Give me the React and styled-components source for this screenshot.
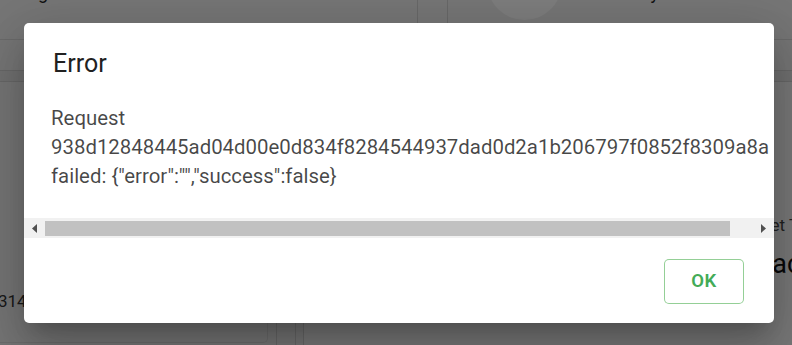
import React from "react";
import styled, { createGlobalStyle } from "styled-components";

const GlobalStyle = createGlobalStyle`
  html, body { margin: 0; padding: 0; }
  body {
    width: 792px;
    height: 345px;
    overflow: hidden;
    font-family: Roboto, "Noto Sans", Arial, sans-serif;
    -webkit-font-smoothing: antialiased;
  }
`;

/* ---------- background application (dimmed) ---------- */

const Stage = styled.div`
  position: relative;
  width: 792px;
  height: 345px;
  overflow: hidden;
  background: #ececec;
  color: #222;
`;

const TopBar = styled.header`
  height: 40px;
  box-sizing: border-box;
  display: grid;
  grid-template-columns: 417px 31px 1fr;
  border-bottom: 1px solid #d4d4d4;
  background: #ececec;
`;

const TopCell = styled.div`
  display: flex;
  align-items: flex-start;
  border-right: ${(p) => (p.$divider ? "1px solid #d0d0d0" : "none")};
  border-left: ${(p) => (p.$divider ? "1px solid #d0d0d0" : "none")};
`;

const TopLabel = styled.span`
  font-size: 18px;
  line-height: 20px;
  margin-top: -17px;
  margin-left: ${(p) => p.$indent}px;
  color: #222;
`;

const Avatar = styled.div`
  width: 75px;
  height: 75px;
  border-radius: 50%;
  margin-top: -55px;
  margin-left: 39px;
  background: #fafafa;
  flex: none;
`;

const SubBar = styled.div`
  height: 30px;
  background: #ececec;
`;

const TabBand = styled.div`
  height: 12px;
  box-sizing: border-box;
  border-top: 1px solid #d0d0d0;
  border-bottom: 1px solid #d0d0d0;
  background: #e2e2e2;
`;

const Content = styled.main`
  height: 263px;
  display: grid;
  grid-template-columns: 268px 8px 20px 7px 1fr;
`;

const LeftCard = styled.section`
  height: 261px;
  background: #ececec;
  border-bottom: 1px solid #dadada;
  border-right: 1px solid #dadada;
  border-bottom-right-radius: 5px;
  box-sizing: border-box;
  padding-top: 209px;
`;

const CountText = styled.div`
  font-size: 17px;
  line-height: 20px;
  color: #333;
  margin-left: -2px;
`;

const Rail = styled.div`
  border-left: ${(p) => (p.$lined ? "1px solid #d0d0d0" : "none")};
  border-right: ${(p) => (p.$lined ? "1px solid #d0d0d0" : "none")};
`;

const RightCard = styled.section`
  border-left: 1px solid #d0d0d0;
  background: #f2f2f2;
  display: flex;
  flex-direction: column;
  align-items: flex-start;
  padding-top: 133px;
  padding-left: 433px;
`;

const FieldLabel = styled.div`
  font-size: 17px;
  line-height: 20px;
  color: #444;
  white-space: nowrap;
`;

const FieldValue = styled.div`
  font-size: 27px;
  line-height: 34px;
  margin-top: 12px;
  margin-left: -30px;
  color: #111;
  white-space: nowrap;
`;

/* ---------- overlay + dialog ---------- */

const Overlay = styled.div`
  position: absolute;
  inset: 0;
  background: rgba(0, 0, 0, 0.5);
  display: flex;
  align-items: center;
  justify-content: center;
  padding-left: 6px;
`;

const Dialog = styled.div`
  width: 750px;
  height: 300px;
  background: #fff;
  border-radius: 5px;
  overflow: hidden;
  display: flex;
  flex-direction: column;
  box-shadow: 0 14px 19px -9px rgba(0, 0, 0, 0.2),
    0 30px 48px 4px rgba(0, 0, 0, 0.14), 0 11px 58px 10px rgba(0, 0, 0, 0.12);
`;

const DialogTitle = styled.h2`
  margin: 0;
  padding: 21px 29px 0;
  font-size: 25px;
  line-height: 40px;
  font-weight: 400;
  color: #212121;
  letter-spacing: 0;
`;

const DialogText = styled.div`
  padding: 20px 30px 27px 27px;
  font-size: 20.4px;
  line-height: 29.3px;
  color: rgba(0, 0, 0, 0.72);
  overflow: hidden;
  word-break: normal;
`;

const Scrollbar = styled.div`
  height: 20px;
  flex: none;
  display: flex;
  background: #f1f1f1;
`;

const ScrollArrow = styled.div`
  width: 20px;
  height: 20px;
  flex: none;
  display: flex;
`;

const Track = styled.div`
  flex: 1;
  padding: 3px 0 2px 1px;
  display: flex;
`;

const Thumb = styled.div`
  height: 100%;
  background: #c1c1c1;
`;

const Actions = styled.div`
  display: flex;
  justify-content: flex-end;
  padding: 21px 30px 19px;
`;

const OkButton = styled.button`
  width: 80px;
  height: 45px;
  box-sizing: border-box;
  border: 1px solid rgba(76, 175, 80, 0.6);
  border-radius: 5px;
  background: #fff;
  color: #43ab57;
  font-family: Roboto, Arial, sans-serif;
  font-size: 18.5px;
  font-weight: 600;
  letter-spacing: 0.5px;
  cursor: pointer;
`;

function Arrow({ dir }) {
  const pts = dir === "left" ? "8,10.5 13,6 13,15" : "12,10.5 7,6 7,15";
  return (
    <ScrollArrow>
      <svg width="20" height="20" viewBox="0 0 20 20">
        <polygon points={pts} fill="#505050" />
      </svg>
    </ScrollArrow>
  );
}

const VISIBLE = 750;
const SCROLL_WIDTH = 777;
const TRACK = VISIBLE - 40;

export default function App() {
  const thumbWidth = Math.round((VISIBLE / SCROLL_WIDTH) * TRACK);
  return (
    <>
      <GlobalStyle />
      <Stage>
        <TopBar>
          <TopCell>
            <TopLabel $indent={18}>Log</TopLabel>
          </TopCell>
          <TopCell $divider />
          <TopCell>
            <Avatar />
            <TopLabel $indent={38}>Activity</TopLabel>
          </TopCell>
        </TopBar>
        <SubBar />
        <TabBand />
        <Content>
          <LeftCard>
            <CountText>314</CountText>
          </LeftCard>
          <Rail />
          <Rail $lined />
          <Rail />
          <RightCard>
            <FieldLabel>Target Type</FieldLabel>
            <FieldValue>Contract</FieldValue>
          </RightCard>
        </Content>

        <Overlay>
          <Dialog role="dialog">
            <DialogTitle>Error</DialogTitle>
            <DialogText>
              Request
              938d12848445ad04d00e0d834f8284544937dad0d2a1b206797f0852f8309a8a
              failed: {'{"error":"","success":false}'}
            </DialogText>
            <Scrollbar>
              <Arrow dir="left" />
              <Track>
                <Thumb style={{ width: thumbWidth }} />
              </Track>
              <Arrow dir="right" />
            </Scrollbar>
            <Actions>
              <OkButton>OK</OkButton>
            </Actions>
          </Dialog>
        </Overlay>
      </Stage>
    </>
  );
}
